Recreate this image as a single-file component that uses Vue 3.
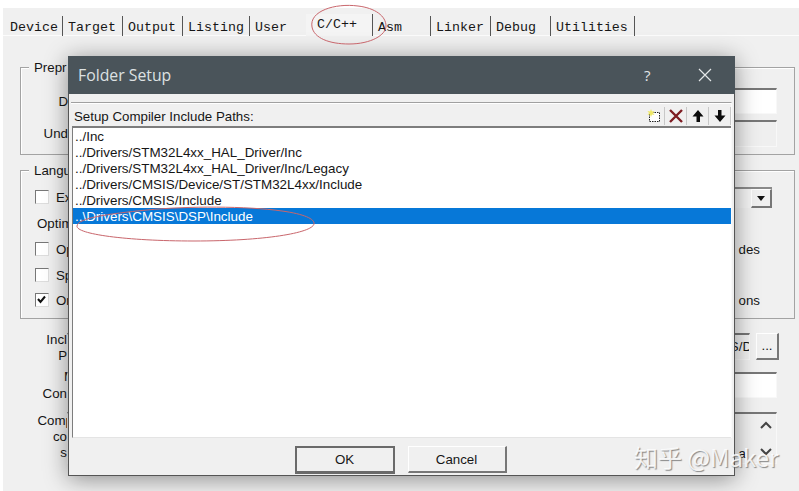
<script setup>
const tabs = [
  { name: 'Device', w: 58 }, { name: 'Target', w: 60 }, { name: 'Output', w: 60 },
  { name: 'Listing', w: 67 }, { name: 'User', w: 56, plain: true },
  { name: 'C/C++', w: 67, active: true }, { name: 'Asm', w: 58 }, { name: 'Linker', w: 60 },
  { name: 'Debug', w: 60 }, { name: 'Utilities', w: 84 }
]
const paths = [
  '../Inc',
  '../Drivers/STM32L4xx_HAL_Driver/Inc',
  '../Drivers/STM32L4xx_HAL_Driver/Inc/Legacy',
  '../Drivers/CMSIS/Device/ST/STM32L4xx/Include',
  '../Drivers/CMSIS/Include',
  '..\\Drivers\\CMSIS\\DSP\\Include'
]
</script>

<template>
  <div class="screen">
    <div class="tabs">
      <div
        v-for="t in tabs"
        :key="t.name"
        class="tab"
        :class="{ active: t.active, plain: t.plain }"
        :style="{ width: t.w + 'px' }"
      >{{ t.name }}</div>
    </div>

    <div class="panel">
      <section class="group g1">
        <span class="legend">Prepr</span>
        <div class="row r1"><label class="lbl">D</label><div class="input white"></div></div>
        <div class="row r2"><label class="lbl">Und</label><div class="input"></div></div>
      </section>

      <section class="group g2">
        <span class="legend">Langu</span>
        <div class="opt o1">
          <span class="check"></span><span>Ex</span>
          <div class="select"><span class="arrow"><span class="caret"></span></span></div>
        </div>
        <div class="opt o2"><span class="optim">Optim</span></div>
        <div class="opt o3"><span class="check"></span><span>Op</span><span class="side">des</span></div>
        <div class="opt o4"><span class="check"></span><span>Sp</span></div>
        <div class="opt o5">
          <span class="check">
            <svg width="13" height="13" viewBox="0 0 13 13"><path d="M3 6l2.500 3L10 3.500" fill="none" stroke="#111" stroke-width="2"/></svg>
          </span>
          <span>On</span><span class="side">ons</span>
        </div>
      </section>

      <div class="row r3">
        <label class="lbl stack"><span>Incl</span><span>P</span></label>
        <div class="input path"><span class="clip">S/D</span></div>
        <div class="dots">...</div>
      </div>
      <div class="row r4">
        <label class="lbl stack"><span class="over-m">M</span><span>Con</span></label>
        <div class="input white"></div>
      </div>
      <div class="row r5">
        <label class="lbl stack"><span class="over-c">Comp</span><span>co</span><span>s</span></label>
        <div class="input tall">
          <span class="tail">a</span>
          <div class="scroll">
            <svg width="14" height="10" viewBox="0 0 14 10"><path d="M2 8l5-5 5 5" fill="none" stroke="#444" stroke-width="2"/></svg>
            <svg width="14" height="10" viewBox="0 0 14 10"><path d="M2 2l5 5 5-5" fill="none" stroke="#444" stroke-width="2"/></svg>
          </div>
        </div>
      </div>
    </div>

    <div class="dialog">
      <header class="title">
        <span class="title-text">Folder Setup</span>
        <span class="help">?</span>
        <svg class="close" width="14" height="14" viewBox="0 0 14 14"><path d="M1 1l12 12M13 1L1 13" stroke="#e4e7e8" stroke-width="1.200" fill="none"/></svg>
      </header>
      <div class="frame">
        <div class="head">
          <span>Setup Compiler Include Paths:</span>
          <div class="tools">
            <button class="tool">
              <svg width="16" height="16" viewBox="0 0 16 16">
                <rect x="3.500" y="4.500" width="10" height="9" fill="#fff" stroke="#222" stroke-dasharray="1.500 1"/>
                <path d="M5 1l1 2.500L8.500 3 7 5l1.500 2L6 6.500 5 9 4 6.500 1.500 7 3 5 1.500 3 4 3.500z" fill="#eee866"/>
              </svg>
            </button>
            <button class="tool">
              <svg width="16" height="16" viewBox="0 0 16 16"><path d="M2 2l12 12M14 2L2 14" stroke="#7e1c22" stroke-width="2.400" fill="none"/></svg>
            </button>
            <button class="tool">
              <svg width="14" height="14" viewBox="0 0 14 14"><path d="M7 1l5.500 6.500H9V13H5.500V7.500H1.500z" fill="#0c0c0c"/></svg>
            </button>
            <button class="tool">
              <svg width="14" height="14" viewBox="0 0 14 14"><path d="M7 13L1.500 6.500H5V1h3.500v5.500h4z" fill="#0c0c0c"/></svg>
            </button>
          </div>
        </div>
        <ul class="list">
          <li v-for="(p, i) in paths" :key="p" :class="{ sel: i === 5 }">{{ p }}</li>
        </ul>
      </div>
      <footer class="foot">
        <button class="btn ok">OK</button>
        <button class="btn">Cancel</button>
      </footer>
    </div>

    <svg class="marks" width="799" height="491" viewBox="0 0 799 491">
      <path d="M312 27C309 11 335 3 358 6c17 2 28 10 28 20 0 9-15 18-37 18-20 0-35-6-37-17z" fill="none" stroke="#c9666c" stroke-width="1"/>
      <path d="M77 226c1-8 30-12 70-16 40-4 100-4 135 1 22 3 33 8 32 13-2 9-50 17-120 17-68 0-118-7-117-15z" fill="none" stroke="#c9666c" stroke-width="1"/>
    </svg>

    <div class="watermark">知乎 @Maker</div>
  </div>
</template>

<style>
html, body { margin: 0; background: #fff; }
</style>

<style scoped>
.screen {
  position: relative;
  width: 799px;
  height: 491px;
  overflow: hidden;
  box-sizing: border-box;
  padding: 8px 0 0 3px;
  background: #fff;
  font: 13.300px "Liberation Sans", Arial, sans-serif;
  color: #161616;
}
.tabs {
  display: flex;
  height: 28px;
  box-sizing: border-box;
  background: #f0f0f0;
  padding: 8px 0 0 2px;
  border-bottom: 1px solid #fcfcfc;
  font: 13.300px "Liberation Mono", "DejaVu Sans Mono", monospace;
}
.tab {
  box-sizing: border-box;
  height: 20px;
  padding: 4px 0 0 5px;
  line-height: 15px;
  border-right: 1px solid #555;
  white-space: nowrap;
  flex: none;
}
.tab.plain { border-right-color: transparent; }
.tab.active {
  padding: 3px 0 0 11px;
  margin-top: -2px;
  height: 22px;
  background: #f4f4f4;
}
.panel {
  background: #f0f0f0;
  height: 455px;
  box-sizing: border-box;
  padding: 31px 4px 0 17px;
}
.group {
  position: relative;
  box-sizing: border-box;
  border: 1px solid #a3a3a3;
  box-shadow: inset 1px 1px 0 #fff;
}
.g1 { height: 88px; padding: 20px 17px 0 0; }
.g2 { height: 149px; margin-top: 15px; padding: 19px 0 0 14px; }
.legend {
  position: absolute;
  top: -8px;
  left: 8px;
  padding: 0 5px;
  background: #f0f0f0;
  white-space: nowrap;
}
.row { display: flex; align-items: center; }
.lbl { flex: none; width: 47px; text-align: right; }
.lbl.stack { display: flex; flex-direction: column; align-items: flex-end; line-height: 16px; }
.over-m { margin-right: -8px; }
.over-c { margin-right: -6px; }
.input {
  flex: 1;
  box-sizing: border-box;
  border: 1px solid #f8f8f8;
  border-top: 2px solid #777;
  background: #efefef;
}
.input.white { background: #fff; }
.r1 .input { height: 26px; }
.r2 { margin-top: 6px; }
.r2 .input { height: 27px; }
.opt { display: flex; align-items: center; gap: 7px; height: 14px; white-space: nowrap; position: relative; }
.check {
  flex: none;
  width: 14px;
  height: 14px;
  box-sizing: border-box;
  border: 1px solid #777;
  border-right-color: #ddd;
  border-bottom-color: #ddd;
  background: #fff;
  display: block;
}
.check svg { display: block; margin: -1px; }
.o2 { margin-top: 12px; }
.optim { margin-left: 2px; }
.o3 { margin-top: 12px; }
.o4 { margin-top: 12px; }
.o5 { margin-top: 11px; }
.side { position: absolute; right: 34px; }
.select {
  position: absolute;
  left: 620px;
  top: -3px;
  width: 117px;
  height: 21px;
  box-sizing: border-box;
  border-top: 2px solid #8a8a8a;
  background: #f4f4f4;
  display: flex;
  justify-content: flex-end;
}
.arrow {
  width: 21px;
  height: 19px;
  box-sizing: border-box;
  background: #f0f0f0;
  border: 1px solid #fff;
  border-right: 2px solid #777;
  border-bottom: 2px solid #777;
  display: flex;
  align-items: center;
  justify-content: center;
}
.caret {
  width: 0;
  height: 0;
  border: 4px solid transparent;
  border-top: 5px solid #111;
  border-bottom: 0;
}
.r3 { margin-top: 14px; height: 27px; padding-right: 16px; }
.r3 .lbl { margin-top: 2px; }
.input.path {
  height: 27px;
  margin-right: 6px;
  overflow: hidden;
  white-space: nowrap;
  text-align: right;
  line-height: 24px;
  background: #f2f2f2;
}
.clip { display: inline-block; margin-right: -3px; }
.dots {
  flex: none;
  width: 23px;
  height: 27px;
  box-sizing: border-box;
  border: 1px solid #fff;
  border-right: 2px solid #777;
  border-bottom: 2px solid #777;
  text-align: center;
  line-height: 24px;
  background: #f0f0f0;
}
.r4 { margin-top: 12px; height: 26px; padding-right: 18px; }
.r4 .lbl { line-height: 17px; margin-top: -1px; }
.r4 .input { height: 26px; }
.r5 { margin-top: 14px; height: 52px; padding-right: 18px; align-items: flex-start; }
.r5 .lbl { margin-top: 1px; }
.input.tall {
  height: 52px;
  position: relative;
  background: #f0f0f0;
}
.tail { position: absolute; right: 30px; top: 32px; }
.scroll {
  position: absolute;
  right: 0;
  top: 0;
  bottom: 0;
  width: 20px;
  display: flex;
  flex-direction: column;
  align-items: center;
  justify-content: space-between;
  padding: 6px 0;
  box-sizing: border-box;
}

.dialog {
  position: absolute;
  left: 68px;
  top: 56px;
  width: 667px;
  height: 420px;
  box-sizing: border-box;
  display: flex;
  flex-direction: column;
  background: #f0f0f0;
  border: 1px solid #555;
  border-top: 0;
  box-shadow: 0 3px 22px rgba(0, 0, 0, .42);
}
.title {
  flex: none;
  height: 38px;
  background: #4a545a;
  margin: 0 -1px;
  display: flex;
  align-items: center;
  position: relative;
  padding-left: 10px;
}
.title-text { font: 15.800px "Open Sans", "Noto Sans", sans-serif; color: #dde1e2; }
.help { position: absolute; left: 576px; top: 9px; font: 15px "Open Sans", sans-serif; color: #e4e7e8; }
.close { position: absolute; left: 630px; top: 12px; }
.frame {
  flex: none;
  margin: 8px 2px 0;
  height: 336px;
  box-sizing: border-box;
  border-top: 1px solid #a0a0a0;
  border-right: 1px solid #fafafa;
  box-shadow: inset 0 1px 0 #fff;
  display: flex;
  flex-direction: column;
}
.head {
  flex: none;
  height: 23px;
  display: flex;
  align-items: center;
  justify-content: space-between;
  padding: 3px 0 0 3px;
  box-sizing: border-box;
}
.tools { display: flex; }
.tool {
  appearance: none;
  padding: 0;
  width: 22px;
  height: 18px;
  background: #f0f0f0;
  border: 0;
  border-right: 1px solid #c8c8c8;
  display: flex;
  align-items: center;
  justify-content: center;
}
.list {
  list-style: none;
  margin: 0 0 0 1px;
  padding: 0;
  flex: 1;
  background: #fff;
  border-top: 2px solid #7d7d7d;
  border-left: 1px solid #7d7d7d;
  border-bottom: 1px solid #e4e4e4;
  font-size: 13.400px;
}
.list li { height: 16px; line-height: 17px; padding-left: 2px; white-space: nowrap; }
.list li.sel { background: #0778d8; color: #fff; }
.foot {
  flex: 1;
  display: flex;
  justify-content: center;
  gap: 13px;
  padding: 8px 2px 0 0;
}
.btn {
  appearance: none;
  width: 99px;
  height: 27px;
  box-sizing: border-box;
  background: #f0f0f0;
  border: 1px solid #fff;
  border-right: 2px solid #777;
  border-bottom: 2px solid #777;
  font: 13.300px "Liberation Sans", Arial, sans-serif;
  color: #161616;
  padding: 0;
}
.btn.ok { width: 100px; height: 28px; border: 2px solid #6a6a6a; border-bottom-width: 3px; }

.marks { position: absolute; left: 0; top: 0; pointer-events: none; }
.watermark {
  position: absolute;
  left: 634px;
  top: 439px;
  font: 24px "Noto Sans CJK SC", "Noto Sans", sans-serif;
  color: rgba(255, 255, 255, .85);
  text-shadow: 1px 1px 1px rgba(110, 110, 110, .8);
  white-space: nowrap;
}
</style>
